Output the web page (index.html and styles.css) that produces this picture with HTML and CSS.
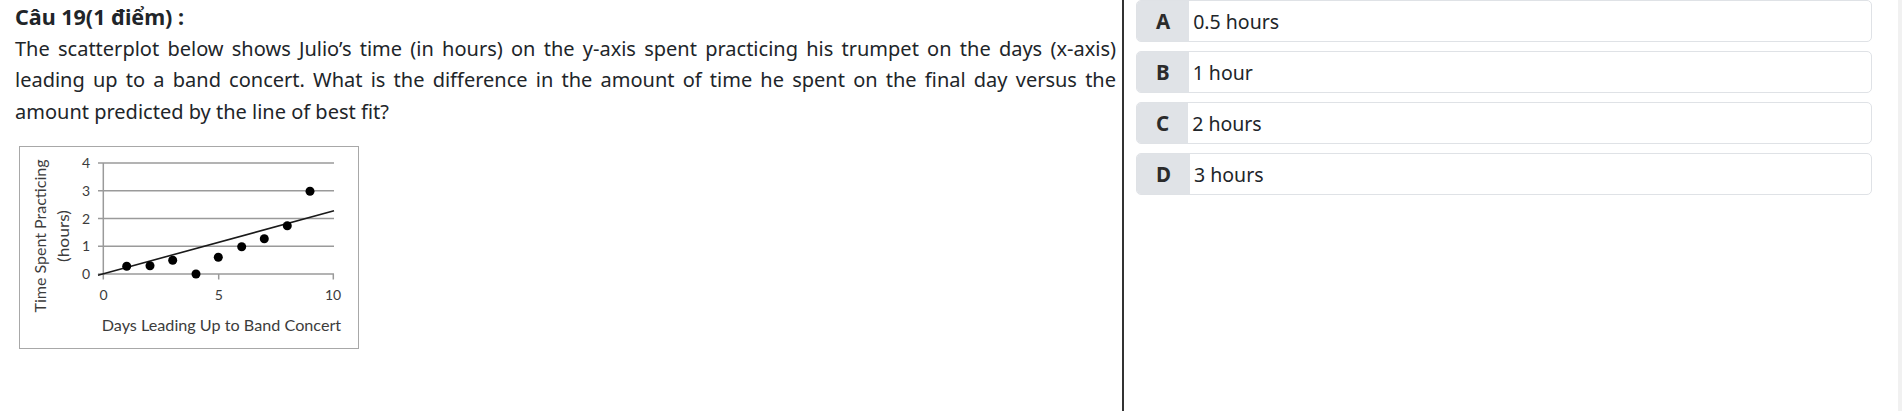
FILE: index.html
```html
<!DOCTYPE html>
<html lang="vi">
<head>
<meta charset="utf-8">
<title>Câu 19</title>
<link rel="stylesheet" href="styles.css">
</head>
<body>
<div class="page">
  <div class="question">
    <div class="q-title">Câu 19(1 điểm) :</div>
    <p class="q-text">The scatterplot below shows Julio’s time (in hours) on the y-axis spent practicing his trumpet on the days (x-axis) leading up to a band concert. What is the difference in the amount of time he spent on the final day versus the amount predicted by the line of best fit?</p>
    <div class="chart">
      <svg width="338" height="201" viewBox="0 0 338 201" xmlns="http://www.w3.org/2000/svg">
        <g stroke="#9a9a9a" stroke-width="1.5">
          <line x1="78" y1="16" x2="314" y2="16"/>
          <line x1="78" y1="43.75" x2="314" y2="43.75"/>
          <line x1="78" y1="71.5" x2="314" y2="71.5"/>
          <line x1="78" y1="99.25" x2="314" y2="99.25"/>
          <line x1="78" y1="127" x2="314" y2="127"/>
          <line x1="83.3" y1="16" x2="83.3" y2="132.5"/>
          <line x1="198.7" y1="127" x2="198.7" y2="132.5"/>
          <line x1="313.3" y1="127" x2="313.3" y2="132.5"/>
        </g>
        <g class="ax" text-anchor="middle">
          <text x="66" y="21">4</text>
          <text x="66" y="48.75">3</text>
          <text x="66" y="76.5">2</text>
          <text x="66" y="104.25">1</text>
          <text x="66" y="132">0</text>
          <text x="83.5" y="153">0</text>
          <text x="198.7" y="153">5</text>
          <text x="313" y="153">10</text>
        </g>
        <text class="xt" x="81.7" y="183.5" textLength="239.5" lengthAdjust="spacingAndGlyphs">Days Leading Up to Band Concert</text>
        <g class="yt" text-anchor="middle">
          <text transform="translate(25.5 89) rotate(-90)" x="0" y="0" textLength="153" lengthAdjust="spacingAndGlyphs">Time Spent Practicing</text>
          <text transform="translate(48.5 89) rotate(-90)" x="0" y="0" textLength="52" lengthAdjust="spacingAndGlyphs">(hours)</text>
        </g>
        <line x1="78" y1="128.3" x2="314" y2="63.7" stroke="#1a1a1a" stroke-width="1.6"/>
        <g fill="#000">
          <circle cx="106.7" cy="119.3" r="4.5"/>
          <circle cx="130" cy="118.7" r="4.5"/>
          <circle cx="152.7" cy="113.3" r="4.5"/>
          <circle cx="176" cy="127" r="4.5"/>
          <circle cx="198.3" cy="110.3" r="4.5"/>
          <circle cx="221.7" cy="99.7" r="4.5"/>
          <circle cx="244.3" cy="91.7" r="4.5"/>
          <circle cx="267.3" cy="78.7" r="4.5"/>
          <circle cx="290" cy="44.3" r="4.5"/>
        </g>
      </svg>
    </div>
  </div>
  <div class="answers">
    <div class="option"><span class="opt-label">A</span><span class="opt-text">0.5 hours</span></div>
    <div class="option"><span class="opt-label">B</span><span class="opt-text">1 hour</span></div>
    <div class="option"><span class="opt-label">C</span><span class="opt-text">2 hours</span></div>
    <div class="option"><span class="opt-label">D</span><span class="opt-text">3 hours</span></div>
  </div>
  <div class="scroll-edge"></div>
</div>
</body>
</html>
```
FILE: styles.css
```css
html, body {
  margin: 0;
  padding: 0;
  background: #fff;
}
body {
  font-family: "Noto Sans", "Open Sans", sans-serif;
  color: #212529;
}
.page {
  display: flex;
  height: 411px;
}
.question {
  width: 1101px;
  padding: 1px 6px 0 15px;
  border-right: 2px solid #333;
  flex: none;
}
.q-title {
  font-weight: 700;
  font-size: 21.5px;
  line-height: 31.5px;
}
.q-text {
  margin: 0;
  font-size: 20px;
  line-height: 31.5px;
  text-align: justify;
}
.chart {
  margin: 19px 0 0 4px;
  width: 338px;
  height: 201px;
  border: 1px solid #a8a8a8;
}
.chart svg {
  display: block;
}
.ax {
  font-family: Lato, "Open Sans", sans-serif;
  font-size: 14px;
  fill: #3c3c3c;
}
.xt {
  font-family: Lato, "Open Sans", sans-serif;
  font-size: 16px;
  fill: #3c3c3c;
}
.yt {
  font-family: Lato, "Open Sans", sans-serif;
  font-size: 16px;
  fill: #3c3c3c;
}
.answers {
  width: 736px;
  padding-left: 12px;
  flex: none;
  display: flex;
  flex-direction: column;
  gap: 9px;
}
.option {
  display: flex;
  height: 40px;
  border: 1px solid #dfe2e6;
  border-radius: 5px;
  overflow: hidden;
  font-size: 19.5px;
}
.opt-label {
  display: flex;
  align-items: center;
  padding: 0 19px;
  background: #e0e3e7;
  font-weight: 700;
  font-size: 20.5px;
  color: #2b2b2b;
}
.opt-text {
  display: flex;
  align-items: center;
  padding-left: 4px;
  color: #212529;
}
.scroll-edge {
  margin-left: auto;
  width: 4px;
  background: #f1f1f1;
}
```
